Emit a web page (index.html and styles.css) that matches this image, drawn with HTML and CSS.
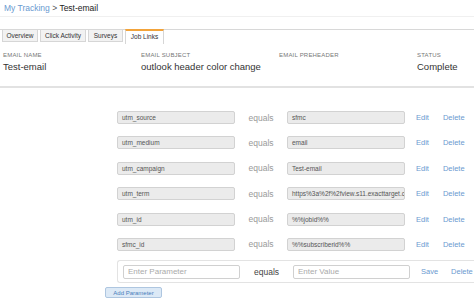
FILE: index.html
```html
<!DOCTYPE html>
<html>
<head>
  <link rel="stylesheet" href="styles.css">
</head>
<body>
  <div class="breadcrumb">
    <a href="#">My Tracking</a> &gt; <b>Test-email</b>
  </div>

  <div class="tabs">
    <div class="tab tab-overview">Overview</div>
    <div class="tab tab-clicks">Click Activity</div>
    <div class="tab tab-surveys">Surveys</div>
    <div class="tab tab-links active">Job Links</div>
  </div>

  <div class="details">
    <div class="detail">
      <div class="detail-label">Email Name</div>
      <div class="detail-value">Test-email</div>
    </div>
    <div class="detail">
      <div class="detail-label">Email Subject</div>
      <div class="detail-value">outlook header color change</div>
    </div>
    <div class="detail">
      <div class="detail-label">Email Preheader</div>
      <div class="detail-value"></div>
    </div>
    <div class="detail">
      <div class="detail-label">Status</div>
      <div class="detail-value">Complete</div>
    </div>
  </div>

  <div class="params">
    <div class="param-row">
      <div class="param-field">utm_source</div>
      <span class="equals">equals</span>
      <div class="param-field">sfmc</div>
      <a class="link" href="#">Edit</a>
      <a class="link" href="#">Delete</a>
    </div>
    <div class="param-row">
      <div class="param-field">utm_medium</div>
      <span class="equals">equals</span>
      <div class="param-field">email</div>
      <a class="link" href="#">Edit</a>
      <a class="link" href="#">Delete</a>
    </div>
    <div class="param-row">
      <div class="param-field">utm_campaign</div>
      <span class="equals">equals</span>
      <div class="param-field">Test-email</div>
      <a class="link" href="#">Edit</a>
      <a class="link" href="#">Delete</a>
    </div>
    <div class="param-row">
      <div class="param-field">utm_term</div>
      <span class="equals">equals</span>
      <div class="param-field">https%3a%2f%2fview.s11.exacttarget.com</div>
      <a class="link" href="#">Edit</a>
      <a class="link" href="#">Delete</a>
    </div>
    <div class="param-row">
      <div class="param-field">utm_id</div>
      <span class="equals">equals</span>
      <div class="param-field">%%jobid%%</div>
      <a class="link" href="#">Edit</a>
      <a class="link" href="#">Delete</a>
    </div>
    <div class="param-row">
      <div class="param-field">sfmc_id</div>
      <span class="equals">equals</span>
      <div class="param-field">%%subscriberid%%</div>
      <a class="link" href="#">Edit</a>
      <a class="link" href="#">Delete</a>
    </div>

    <div class="param-row new-row">
      <input class="new-input" type="text" placeholder="Enter Parameter">
      <span class="equals dark">equals</span>
      <input class="new-input" type="text" placeholder="Enter Value">
      <a class="link" href="#">Save</a>
      <a class="link" href="#">Delete</a>
    </div>
  </div>

  <button class="add-btn" type="button">Add Parameter</button>
</body>
</html>
```

FILE: styles.css
```css
body {
  margin: 0;
  width: 474px;
  font-family: "Liberation Sans", Arial, sans-serif;
  color: #333;
  background: #fff;
  overflow: hidden;
}

a {
  text-decoration: none;
}

.breadcrumb {
  height: 17px;
  padding: 3px 0 0 4px;
  box-sizing: border-box;
  font-size: 8.5px;
  color: #555;
  border-bottom: 1px solid #f0f0f0;
}

.breadcrumb a {
  color: #6a9ad0;
}

.breadcrumb b {
  font-weight: normal;
  color: #222;
}

.tabs {
  display: flex;
  margin-top: 12px;
  padding-left: 2px;
  border-top: 1px solid #d8d8d8;
  gap: 2px;
  height: 15px;
}

.tab {
  box-sizing: border-box;
  height: 12px;
  line-height: 11px;
  text-align: center;
  white-space: nowrap;
  font-size: 6.5px;
  color: #333;
  background: #f2f2f2;
  border: 1px solid #d6d6d6;
  border-top: none;
}

.tab-overview { width: 36px; }
.tab-clicks { width: 46px; }
.tab-surveys { width: 35px; }

.tab.active {
  width: 39px;
  height: 15px;
  line-height: 12px;
  margin-top: -1px;
  background: #fff;
  border-top: 2px solid #f2a33a;
  border-bottom: none;
}

.details {
  display: flex;
  padding: 7px 0 0 3px;
  height: 34px;
  border-bottom: 2px solid #e2e2e2;
}

.detail {
  width: 138px;
}

.detail:last-child {
  width: auto;
}

.detail-label {
  font-size: 6px;
  color: #777;
  text-transform: uppercase;
  letter-spacing: 0.2px;
  height: 9px;
}

.detail-value {
  font-size: 9.5px;
  color: #333;
}

.params {
  display: flex;
  flex-direction: column;
  gap: 12.4px;
  padding: 23px 0 0 117px;
}

.param-row {
  display: flex;
  align-items: center;
  height: 13px;
}

.param-field {
  width: 118px;
  height: 13px;
  line-height: 11px;
  padding: 0 4px;
  box-sizing: border-box;
  overflow: hidden;
  white-space: nowrap;
  border: 1px solid #d2d2d2;
  border-radius: 2px;
  background: #ebebeb;
  font-size: 6.5px;
  color: #555;
}

.equals {
  width: 52px;
  text-align: center;
  font-size: 8.5px;
  color: #999;
}

.equals.dark {
  color: #444;
}

.link {
  font-size: 7.5px;
  color: #6a9ad0;
  margin-left: 11px;
}

.link + .link {
  margin-left: 14px;
}

.new-row {
  height: 21px;
  margin-top: -3px;
  padding-left: 5px;
  border: 1px solid #e3e3e3;
  border-right: none;
  border-radius: 3px 0 0 3px;
}

.new-input {
  width: 117px;
  height: 14px;
  padding: 0 4px;
  box-sizing: border-box;
  border: 1px solid #d0d0d0;
  border-radius: 2px;
  background: #fff;
  font-family: "Liberation Sans", Arial, sans-serif;
  font-size: 8px;
}

.new-input::placeholder {
  color: #aaa;
}

.new-row .equals {
  width: 53px;
}

.new-row .link {
  margin-left: 11px;
}

.new-row .link + .link {
  margin-left: 13px;
}

.add-btn {
  display: block;
  margin: 4px 0 0 105px;
  height: 11px;
  width: 57px;
  padding: 0;
  font-family: "Liberation Sans", Arial, sans-serif;
  font-size: 6px;
  color: #4a7ebb;
  background: #dce9f6;
  border: 1px solid #aec6e0;
  border-radius: 2px;
}
```
